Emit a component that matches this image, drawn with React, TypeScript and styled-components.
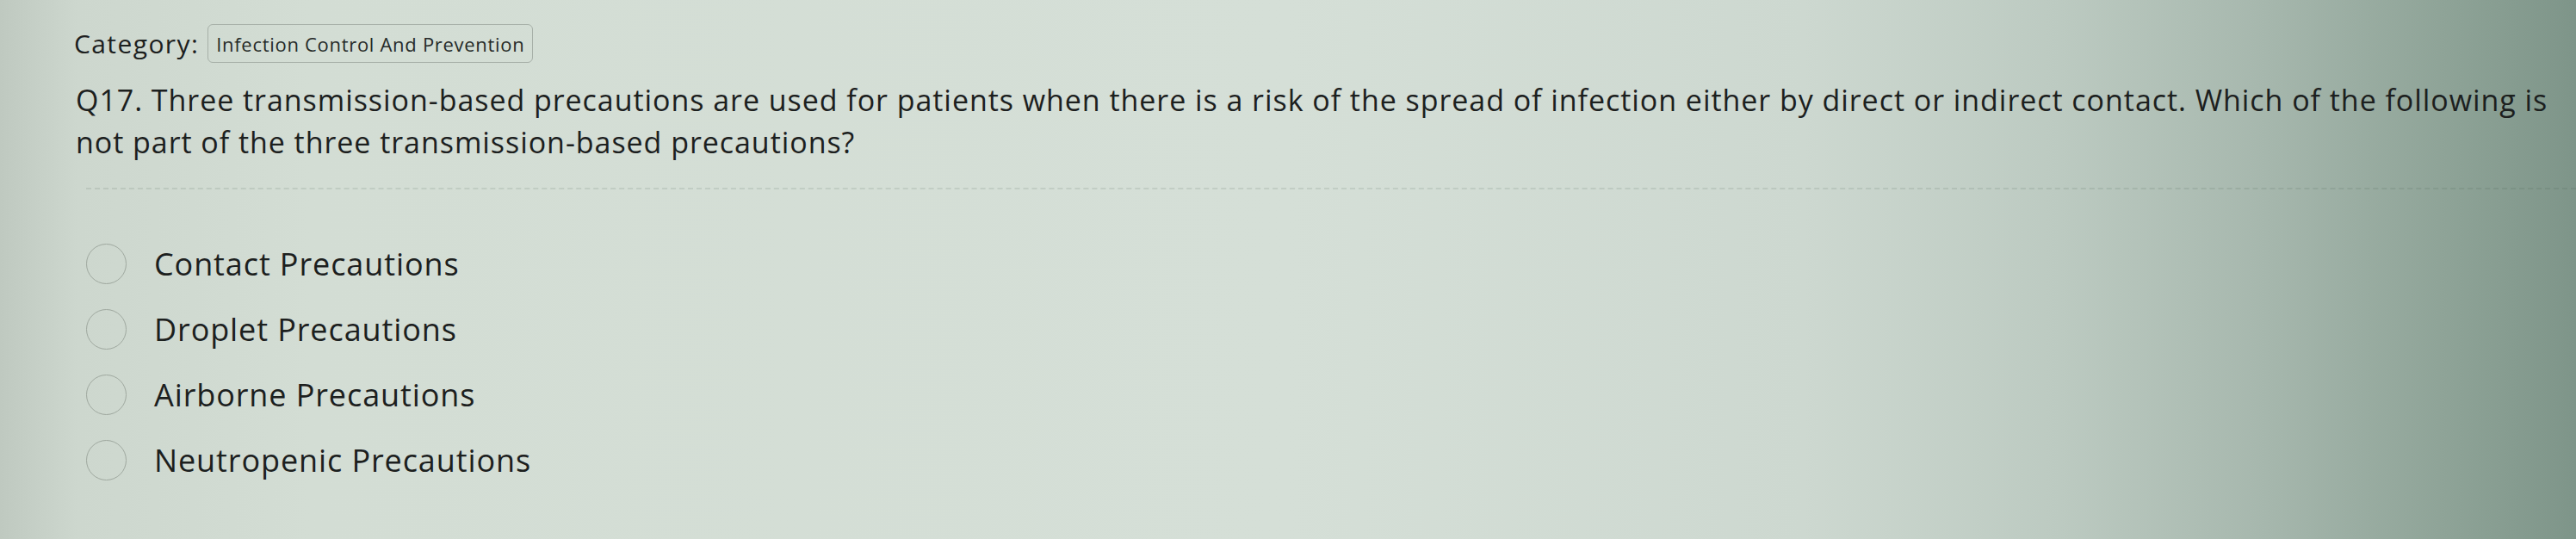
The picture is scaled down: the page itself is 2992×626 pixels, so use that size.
import React from "react";
import styled, { createGlobalStyle } from "styled-components";

const GlobalStyle = createGlobalStyle`
  html, body {
    margin: 0;
    padding: 0;
  }
  body {
    font-family: "Open Sans", "Liberation Sans", sans-serif;
    color: #1c201e;
    background: #d3ddd4;
  }
`;

const Page = styled.div`
  min-height: 626px;
  box-sizing: border-box;
  padding: 28px 0 0 86px;
  background: linear-gradient(
    90deg,
    #bfc9c0 0%,
    #cdd7ce 3%,
    #d3ddd4 12%,
    #d5dfd7 50%,
    #cdd8d0 70%,
    #bccac1 80%,
    #a6b7ad 88%,
    #8ea397 95%,
    #7e9589 100%
  );
`;

const Header = styled.div`
  display: flex;
  align-items: center;
  gap: 10px;
`;

const CategoryLabel = styled.span`
  font-size: 30px;
  font-weight: 500;
  letter-spacing: 1.4px;
`;

const Badge = styled.span`
  display: inline-flex;
  align-items: center;
  height: 45px;
  box-sizing: border-box;
  padding: 0 9px;
  border: 1.5px solid #a7b0a8;
  border-radius: 6px;
  font-size: 22px;
  font-weight: 400;
  letter-spacing: 0.7px;
  color: #262a28;
`;

const Question = styled.p`
  margin: 19px 0 0 2px;
  max-width: 2890px;
  font-size: 34px;
  font-weight: 500;
  line-height: 49px;
  letter-spacing: 0.95px;
`;

const Divider = styled.hr`
  margin: 28px 0 0 14px;
  border: none;
  border-top: 2px dashed rgba(60, 80, 66, 0.12);
`;

const Options = styled.ul`
  list-style: none;
  margin: 48px 0 0 14px;
  padding: 0;
`;

const Option = styled.li`
  display: flex;
  align-items: center;
  gap: 32px;
  height: 76px;
  font-size: 36px;
  font-weight: 400;
  letter-spacing: 0.9px;
`;

const Radio = styled.span`
  flex: none;
  width: 47px;
  height: 47px;
  box-sizing: border-box;
  border: 1.5px solid #9fa89f;
  border-radius: 50%;
`;

const options = [
  "Contact Precautions",
  "Droplet Precautions",
  "Airborne Precautions",
  "Neutropenic Precautions",
];

const App: React.FC = () => {
  return (
    <Page>
      <GlobalStyle />
      <Header>
        <CategoryLabel>Category:</CategoryLabel>
        <Badge>Infection Control And Prevention</Badge>
      </Header>
      <Question>
        Q17. Three transmission-based precautions are used for patients when
        there is a risk of the spread of infection either by direct or indirect
        contact. Which of the following is not part of the three
        transmission-based precautions?
      </Question>
      <Divider />
      <Options>
        {options.map((label) => (
          <Option key={label}>
            <Radio />
            {label}
          </Option>
        ))}
      </Options>
    </Page>
  );
};

export default App;
